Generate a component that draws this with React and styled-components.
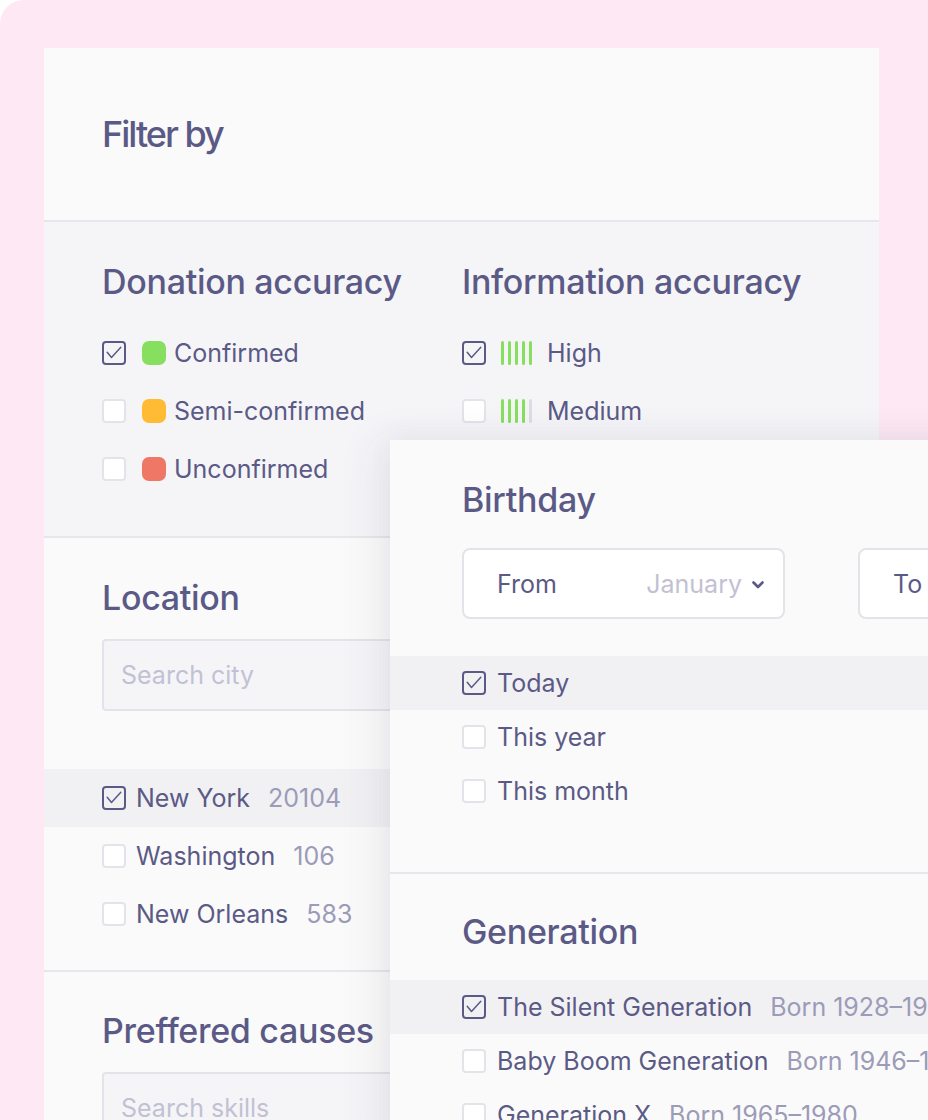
import styled, { createGlobalStyle } from 'styled-components';

const Global = createGlobalStyle`
html, body {
  margin: 0;
  padding: 0;
  background: #ffffff;
  font-family: Inter, "Noto Sans", sans-serif;
}
#root {
  width: 928px;
  height: 1120px;
  overflow: hidden;
}
`;

const Page = styled.div`
position: relative;
width: 928px;
height: 1120px;
box-sizing: border-box;
padding: 48px 49px 0 44px;
background: #fde8f3;
border-radius: 24px 0 0 0;
overflow: hidden;
`;

const Panel = styled.div`
background: #fafafa;
height: 100%;
`;

const Header = styled.div`
height: 172px;
display: flex;
align-items: center;
padding-left: 58px;
border-bottom: 2px solid #e6e6ec;
`;

const Title = styled.h1`
margin: 0;
font-size: 36px;
font-weight: 500;
letter-spacing: -2px;
color: #5b5a86;
`;

const Section = styled.div`
padding: ${p => p.$pad || '40px 0 38px'};
background: ${p => p.$shade ? '#f5f5f8' : 'transparent'};
border-bottom: ${p => p.$last ? 'none' : '2px solid #e6e6ec'};
`;

const Heading = styled.h2`
margin: 0 0 ${p => p.$gap ?? 22}px ${p => p.$inset ?? 58}px;
font-size: 34px;
line-height: 40px;
font-weight: 500;
letter-spacing: -0.3px;
color: #5b5a86;
white-space: nowrap;
`;

const Columns = styled.div`
display: grid;
grid-template-columns: 360px 1fr;
padding-left: 58px;
`;

const Row = styled.div`
display: flex;
align-items: center;
height: ${p => p.$h || 58}px;
padding-left: ${p => p.$inset || 0}px;
background: ${p => p.$active ? '#f1f1f4' : 'transparent'};
font-size: 25px;
color: #5b5a86;
white-space: nowrap;
`;

const Box = styled.span`
width: 24px;
height: 24px;
box-sizing: border-box;
border-radius: 4px;
flex: none;
display: flex;
align-items: center;
justify-content: center;
background: ${p => p.$on ? 'transparent' : '#ffffff'};
border: 2px solid ${p => p.$on ? '#5b5a86' : '#e3e3ea'};
margin-right: ${p => p.$gap || 10}px;
`;

const Dot = styled.span`
width: 24px;
height: 24px;
border-radius: 7px;
background: ${p => p.$color};
margin-right: 8px;
flex: none;
`;

const Bars = styled.span`
display: flex;
gap: 4px;
margin-right: 15px;
`;

const Bar = styled.span`
width: 3px;
height: 24px;
border-radius: 2px;
background: ${p => p.$on ? '#86df5f' : '#dcdce4'};
`;

const Count = styled.span`
margin-left: 18px;
color: #9c9bb8;
`;

const Search = styled.div`
margin-left: 58px;
height: 72px;
box-sizing: border-box;
border: 2px solid #e3e3ea;
border-radius: 4px;
background: #f5f5f8;
display: flex;
align-items: center;
padding-left: 17px;
font-size: 25px;
color: #c2c1d4;
margin-bottom: ${p => p.$after || 0}px;
`;

const Overlay = styled.div`
position: absolute;
left: 390px;
top: 440px;
width: 620px;
height: 720px;
background: #fafafa;
box-shadow: -14px 0 40px rgba(60, 50, 90, 0.07), 0 -6px 24px rgba(60, 50, 90, 0.04);
`;

const Selects = styled.div`
display: flex;
gap: 73px;
padding-left: 72px;
margin-bottom: 37px;
`;

const Select = styled.div`
width: 323px;
height: 71px;
box-sizing: border-box;
border: 2px solid #e3e3ea;
border-radius: 8px;
background: #ffffff;
display: flex;
align-items: center;
padding: 0 18px 0 33px;
font-size: 25px;
color: #5b5a86;
flex: none;
`;

const Value = styled.span`
margin-left: auto;
color: #c2c1d4;
font-size: 25px;
`;

const Check = () => (
  <svg width="20" height="20" viewBox="0 0 20 20" fill="none">
    <path d="M3.2 9.3l4.3 5.2L16.8 4.2" stroke="#5b5a86" strokeWidth="1.5" strokeLinecap="round" strokeLinejoin="round" />
  </svg>
);

const Checkbox = ({ on, gap }) => <Box $on={on} $gap={gap}>{on && <Check />}</Box>;

const Chevron = () => (
  <svg width="14" height="14" viewBox="0 0 14 14" fill="none" style={{ marginLeft: 9, marginTop: 3 }}>
    <path d="M2.5 4.5l4.5 4.5 4.5-4.5" stroke="#5b5a86" strokeWidth="2.6" strokeLinecap="round" strokeLinejoin="round" />
  </svg>
);

const donations = [
  { label: 'Confirmed', color: '#86df5f', on: true },
  { label: 'Semi-confirmed', color: '#ffbb33', on: false },
  { label: 'Unconfirmed', color: '#ee7766', on: false },
];

const accuracy = [
  { label: 'High', level: 5, on: true },
  { label: 'Medium', level: 4, on: false },
];

const cities = [
  { name: 'New York', count: 20104, on: true },
  { name: 'Washington', count: 106 },
  { name: 'New Orleans', count: 583 },
];

const periods = [
  { label: 'Today', on: true },
  { label: 'This year' },
  { label: 'This month' },
];

const generations = [
  { label: 'The Silent Generation', born: 'Born 1928–1945', on: true },
  { label: 'Baby Boom Generation', born: 'Born 1946–1964' },
  { label: 'Generation X', born: 'Born 1965–1980' },
];

export default function App() {
  return (
    <>
      <Global />
      <Page>
        <Panel>
          <Header>
            <Title>Filter by</Title>
          </Header>

          <Section $shade>
            <Columns>
              <div>
                <Heading $inset={0}>Donation accuracy</Heading>
                {donations.map(d => (
                  <Row key={d.label}>
                    <Checkbox on={d.on} gap={16} />
                    <Dot $color={d.color} />
                    {d.label}
                  </Row>
                ))}
              </div>
              <div>
                <Heading $inset={0}>Information accuracy</Heading>
                {accuracy.map(a => (
                  <Row key={a.label}>
                    <Checkbox on={a.on} gap={15} />
                    <Bars>
                      {[0, 1, 2, 3, 4].map(i => <Bar key={i} $on={i < a.level} />)}
                    </Bars>
                    {a.label}
                  </Row>
                ))}
              </div>
            </Columns>
          </Section>

          <Section $pad="40px 0 27px">
            <Heading $gap={21}>Location</Heading>
            <Search $after={58}>Search city</Search>
            {cities.map(c => (
              <Row key={c.name} $inset={58} $active={c.on}>
                <Checkbox on={c.on} />
                {c.name}
                <Count>{c.count}</Count>
              </Row>
            ))}
          </Section>

          <Section $pad="39px 0 0" $last>
            <Heading $gap={21}>Preffered causes</Heading>
            <Search>Search skills</Search>
          </Section>
        </Panel>

        <Overlay>
          <Section $pad="40px 0 54px">
            <Heading $inset={72} $gap={28}>Birthday</Heading>
            <Selects>
              <Select>
                From
                <Value>January</Value>
                <Chevron />
              </Select>
              <Select>To</Select>
            </Selects>
            {periods.map(p => (
              <Row key={p.label} $h={54} $inset={72} $active={p.on}>
                <Checkbox on={p.on} gap={11} />
                {p.label}
              </Row>
            ))}
          </Section>

          <Section $pad="38px 0 0" $last>
            <Heading $inset={72} $gap={28}>Generation</Heading>
            {generations.map(g => (
              <Row key={g.label} $h={54} $inset={72} $active={g.on}>
                <Checkbox on={g.on} gap={11} />
                {g.label}
                <Count>{g.born}</Count>
              </Row>
            ))}
          </Section>
        </Overlay>
      </Page>
    </>
  );
}
